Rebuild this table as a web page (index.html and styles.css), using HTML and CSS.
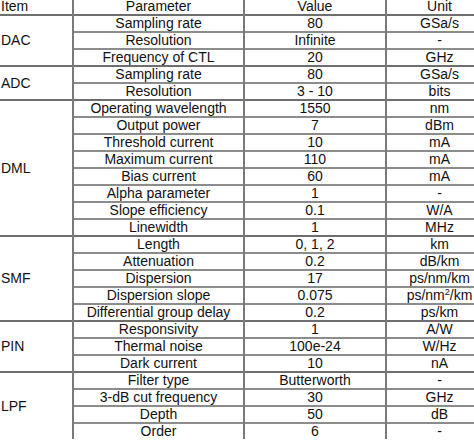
FILE: index.html
```html
<!DOCTYPE html>
<html>
<head>
<meta charset="utf-8">
<link rel="stylesheet" href="styles.css">
</head>
<body>
<table class="spec">
<colgroup><col class="c-item"><col class="c-param"><col class="c-val"><col class="c-unit"></colgroup>
<thead>
<tr class="grp"><th class="item">Item</th><th>Parameter</th><th>Value</th><th>Unit</th></tr>
</thead>
<tbody>
<tr class="grp"><td class="item" rowspan="3">DAC</td><td>Sampling rate</td><td>80</td><td>GSa/s</td></tr>
<tr><td>Resolution</td><td>Infinite</td><td>-</td></tr>
<tr><td>Frequency of CTL</td><td>20</td><td>GHz</td></tr>
<tr class="grp"><td class="item" rowspan="2">ADC</td><td>Sampling rate</td><td>80</td><td>GSa/s</td></tr>
<tr><td>Resolution</td><td>3 - 10</td><td>bits</td></tr>
<tr class="grp"><td class="item" rowspan="8">DML</td><td>Operating wavelength</td><td>1550</td><td>nm</td></tr>
<tr><td>Output power</td><td>7</td><td>dBm</td></tr>
<tr><td>Threshold current</td><td>10</td><td>mA</td></tr>
<tr><td>Maximum current</td><td>110</td><td>mA</td></tr>
<tr><td>Bias current</td><td>60</td><td>mA</td></tr>
<tr><td>Alpha parameter</td><td>1</td><td>-</td></tr>
<tr><td>Slope efficiency</td><td>0.1</td><td>W/A</td></tr>
<tr><td>Linewidth</td><td>1</td><td>MHz</td></tr>
<tr class="grp"><td class="item" rowspan="5">SMF</td><td>Length</td><td>0, 1, 2</td><td>km</td></tr>
<tr><td>Attenuation</td><td>0.2</td><td>dB/km</td></tr>
<tr><td>Dispersion</td><td>17</td><td>ps/nm/km</td></tr>
<tr><td>Dispersion slope</td><td>0.075</td><td>ps/nm<sup>2</sup>/km</td></tr>
<tr><td>Differential group delay</td><td>0.2</td><td>ps/km</td></tr>
<tr class="grp"><td class="item" rowspan="3">PIN</td><td>Responsivity</td><td>1</td><td>A/W</td></tr>
<tr><td>Thermal noise</td><td>100e-24</td><td>W/Hz</td></tr>
<tr><td>Dark current</td><td>10</td><td>nA</td></tr>
<tr class="grp"><td class="item" rowspan="4">LPF</td><td>Filter type</td><td>Butterworth</td><td>-</td></tr>
<tr><td>3-dB cut frequency</td><td>30</td><td>GHz</td></tr>
<tr><td>Depth</td><td>50</td><td>dB</td></tr>
<tr><td>Order</td><td>6</td><td>-</td></tr>
</tbody>
</table>
</body>
</html>
```
FILE: styles.css
```css
html, body {
  margin: 0;
  padding: 0;
  background: #fff;
  overflow: hidden;
}
body {
  width: 474px;
  height: 441px;
}
.spec {
  border-collapse: collapse;
  table-layout: fixed;
  width: 492px;
  margin-top: -3px;
  font-family: "Liberation Sans", Arial, sans-serif;
  font-size: 14px;
  color: #111;
}
.c-item { width: 73px; }
.c-param { width: 171px; }
.c-val { width: 142px; }
.c-unit { width: 106px; }
.spec th, .spec td {
  height: 15px;
  padding: 0;
  line-height: 15px;
  text-align: center;
  font-weight: normal;
  border-top: 2px solid #8c8c8c;
  border-left: 2px solid #7a7a7a;
  white-space: nowrap;
  vertical-align: middle;
}
.spec thead th {
  border-top: none;
  padding-top: 2px;
}
.spec th.item, .spec td.item {
  text-align: left;
  padding-left: 1px;
  border-left: none;
}
.spec tr.grp > td {
  border-top: 2px solid #6e6e6e;
}
.spec thead tr { border-bottom: 2px solid #6e6e6e; }
.spec sup {
  font-size: 9px;
  line-height: 0;
  vertical-align: 5px;
}
```
